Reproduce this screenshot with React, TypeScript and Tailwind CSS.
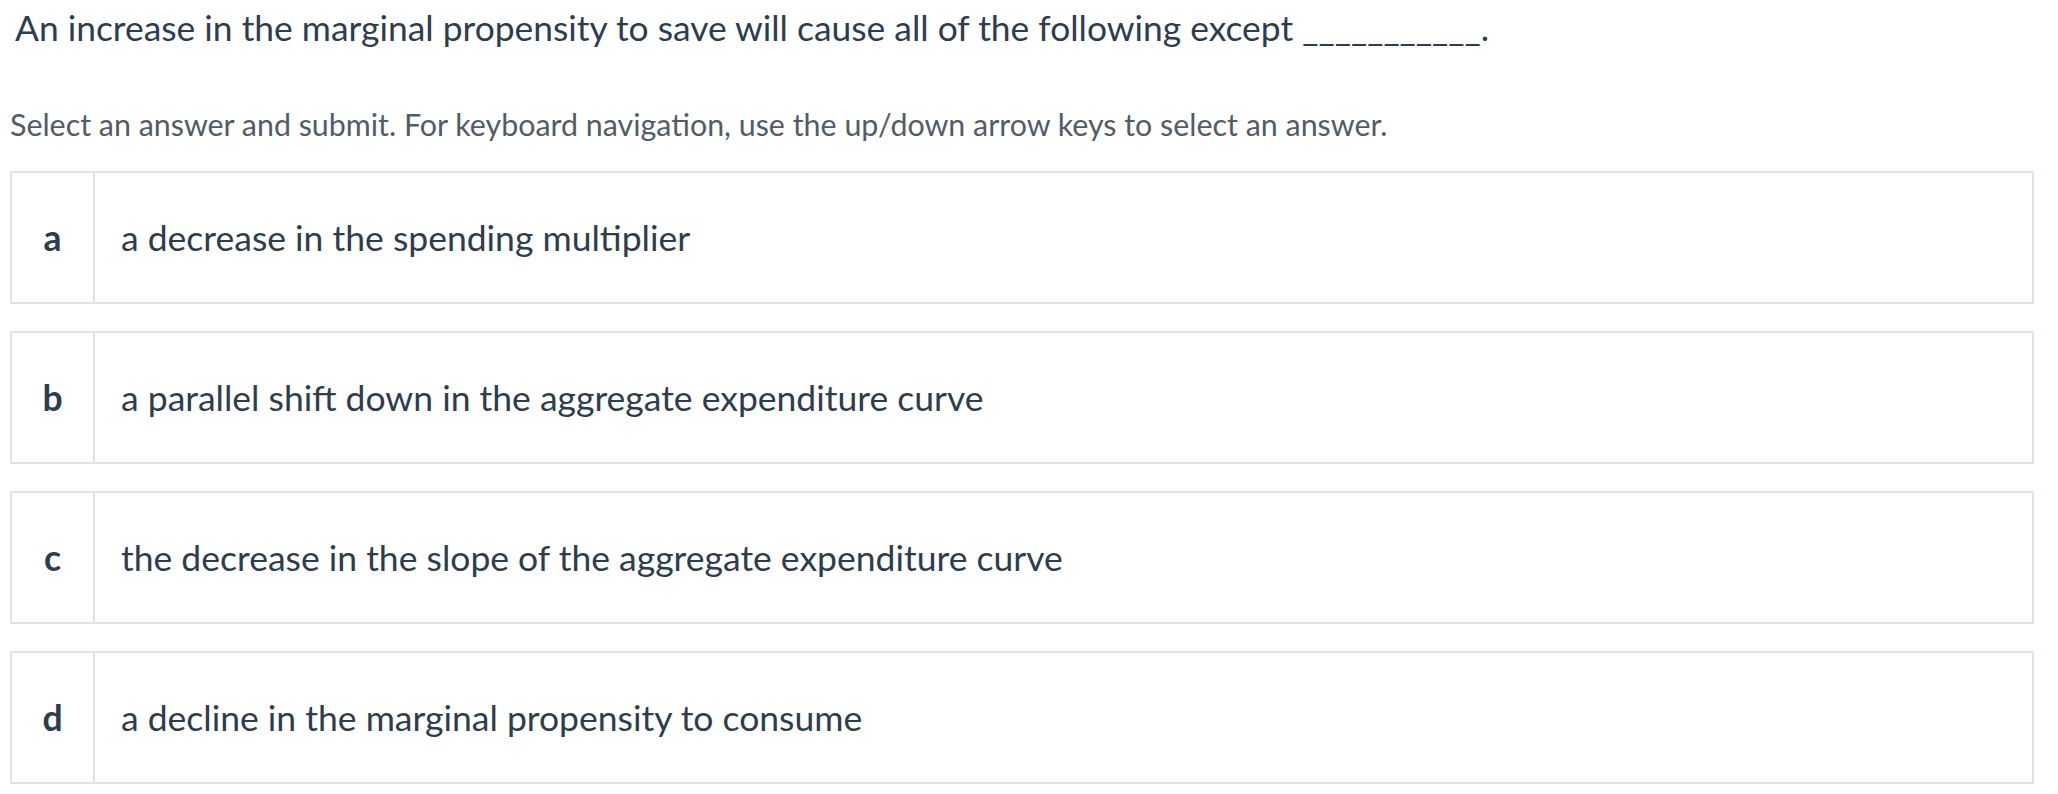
import React from "react";

const options = [
  { key: "a", text: "a decrease in the spending multiplier" },
  { key: "b", text: "a parallel shift down in the aggregate expenditure curve" },
  { key: "c", text: "the decrease in the slope of the aggregate expenditure curve" },
  { key: "d", text: "a decline in the marginal propensity to consume" },
];

const App: React.FC = () => {
  return (
    <div className="min-h-screen bg-white px-[10px] pt-[7px] font-['Lato',sans-serif] text-[#2d3d4e]">
      <h1 className="pl-[5px] text-[35.4px] leading-[42px] font-normal">
        An increase in the marginal propensity to save will cause all of the following except{" "}
        <span>___________</span>.
      </h1>
      <p className="mt-[57px] text-[30.4px] leading-[37px] text-[#525c67]">
        Select an answer and submit. For keyboard navigation, use the up/down arrow keys to select an answer.
      </p>
      <div className="mt-[28px] flex flex-col gap-[27px]">
        {options.map((opt) => (
          <div
            key={opt.key}
            className="flex h-[133px] w-[2024px] border-2 border-[#dfe3e8] bg-white"
          >
            <div className="flex w-[83px] shrink-0 items-center justify-center border-r-2 border-[#dfe3e8] text-[35.5px] leading-[42px] font-bold">
              {opt.key}
            </div>
            <div className="flex flex-1 items-center pl-[26px] text-[35.5px] leading-[42px]">
              {opt.text}
            </div>
          </div>
        ))}
      </div>
    </div>
  );
};

export default App;
